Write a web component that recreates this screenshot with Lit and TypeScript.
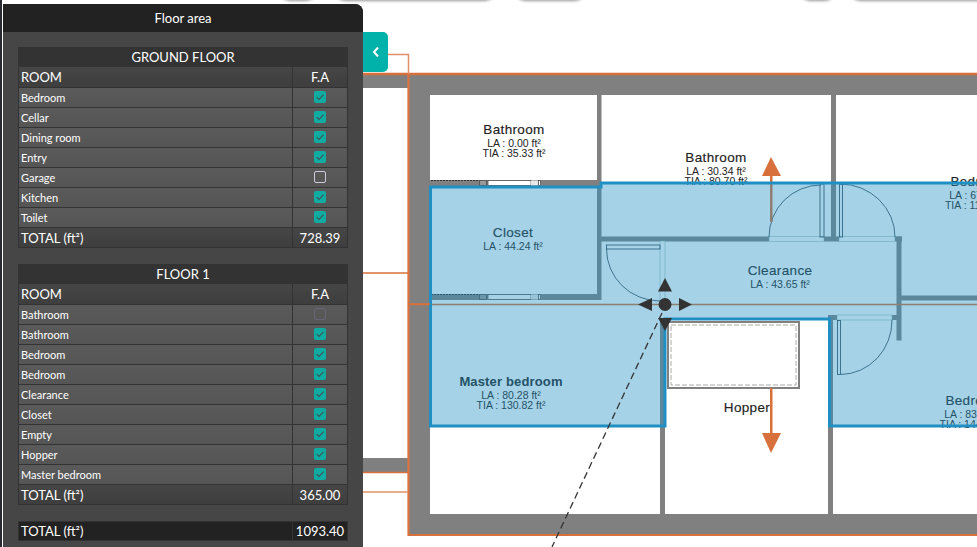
import { LitElement, css, html, svg } from "lit";
import { customElement } from "lit/decorators.js";

type Room = { name: string; on: boolean; dim?: boolean };

const groundFloor: Room[] = [
  { name: "Bedroom", on: true },
  { name: "Cellar", on: true },
  { name: "Dining room", on: true },
  { name: "Entry", on: true },
  { name: "Garage", on: false },
  { name: "Kitchen", on: true },
  { name: "Toilet", on: true },
];

const floorOne: Room[] = [
  { name: "Bathroom", on: false, dim: true },
  { name: "Bathroom", on: true },
  { name: "Bedroom", on: true },
  { name: "Bedroom", on: true },
  { name: "Clearance", on: true },
  { name: "Closet", on: true },
  { name: "Empty", on: true },
  { name: "Hopper", on: true },
  { name: "Master bedroom", on: true },
];

const WALL = "#808080";
const ORANGE = "#d8703c";
const PALE_ORANGE = "#e09068";

// name lines: [x, y, name, bold, la, tia]
const labels: [number, number, string, boolean, string, string][] = [
  [514, 134, "Bathroom", false, "LA : 0.00 ft²", "TIA : 35.33 ft²"],
  [716, 162, "Bathroom", false, "LA : 30.34 ft²", "TIA : 80.70 ft²"],
  [979, 186, "Bedroom", false, "LA : 67.20 ft²", "TIA : 118.40 ft²"],
  [513, 237, "Closet", false, "LA : 44.24 ft²", ""],
  [780, 275, "Clearance", false, "LA : 43.65 ft²", ""],
  [511, 386, "Master bedroom", true, "LA : 80.28 ft²", "TIA : 130.82 ft²"],
  [747, 412, "Hopper", false, "", ""],
  [974, 405, "Bedroom", false, "LA : 83.10 ft²", "TIA : 144.60 ft²"],
];

@customElement("floor-table")
export class FloorTable extends LitElement {
  static properties = {
    title: { type: String },
    rooms: { attribute: false },
    total: { type: String },
  };

  declare title: string;
  declare rooms: Room[];
  declare total: string;

  static styles = css`
    :host {
      display: block;
    }
    .grid {
      display: grid;
      grid-template-columns: 1fr 55px;
      border: 1px solid #333;
      border-top: 0;
      color: #fff;
    }
    .title {
      grid-column: 1 / 3;
      height: 20px;
      margin: 0 -1px;
      background: #333;
      font-size: 13px;
      line-height: 20px;
      text-align: center;
    }
    .cell {
      display: flex;
      align-items: center;
      height: 19px;
      padding-left: 2px;
      border-bottom: 1px solid #333;
      background: linear-gradient(#5a5a5a, #555);
      font-size: 11px;
    }
    .check {
      justify-content: center;
      padding: 0 0 2px;
      height: 17px;
      border-left: 1px solid #333;
    }
    .head {
      height: 20px;
      font-size: 13px;
      background: linear-gradient(#464646, #3e3e3e);
    }
    .head.check {
      padding: 0;
      height: 20px;
    }
    .last {
      border-bottom: 0;
      height: 19px;
    }
    .last.check {
      padding: 0;
      height: 19px;
    }
    .box {
      box-sizing: border-box;
      width: 12px;
      height: 12px;
      border: 1.5px solid #ccd;
      border-radius: 2px;
    }
    .box.dim {
      border-color: #667;
    }
    .box.on {
      border: 0;
      background: #10aca4;
    }
    .box svg {
      display: block;
    }
  `;

  renderBox(r: Room) {
    if (!r.on) return html`<div class="box ${r.dim ? "dim" : ""}"></div>`;
    return html`<div class="box on">
      <svg width="12" height="12" viewBox="0 0 12 12">
        <path d="M2.6 6.2 5 8.4 9.6 3.6" fill="none" stroke="#3a5555" stroke-width="1.1" />
      </svg>
    </div>`;
  }

  render() {
    return html`
      <div class="grid">
        <div class="title">${this.title}</div>
        <div class="cell head">ROOM</div>
        <div class="cell head check">F.A</div>
        ${this.rooms.map(
          (r) => html`
            <div class="cell">${r.name}</div>
            <div class="cell check">${this.renderBox(r)}</div>
          `
        )}
        <div class="cell head last">TOTAL (ft²)</div>
        <div class="cell head last check">${this.total}</div>
      </div>
    `;
  }
}

@customElement("app-root")
export class AppRoot extends LitElement {
  static styles = css`
    :host {
      display: block;
      position: relative;
      width: 977px;
      height: 547px;
      overflow: hidden;
      background: #fff;
      font-family: Lato, "Liberation Sans", sans-serif;
    }
    .plan {
      position: absolute;
      inset: 0;
    }
    .plan text {
      font-family: "Liberation Sans", Arial, sans-serif;
      fill: #222;
      text-anchor: middle;
    }
    .plan .name {
      font-size: 13.5px;
      letter-spacing: 0.35px;
      stroke: #222;
      stroke-width: 0.15px;
    }
    .plan .name.bold {
      font-size: 13px;
      font-weight: 700;
      letter-spacing: 0.15px;
      stroke: none;
    }
    .plan .area {
      font-size: 10.5px;
    }
    .pills {
      position: absolute;
      top: -20px;
      left: 280px;
      display: flex;
      height: 20px;
    }
    .pill {
      background: #fff;
      border-radius: 10px;
      box-shadow: 0 1px 3px rgba(0, 0, 0, 0.4);
    }
    .rail {
      position: absolute;
      left: 0;
      top: 0;
      bottom: 0;
      width: 2px;
      background: #2a2a33;
    }
    .panel {
      position: absolute;
      left: 3px;
      top: 4px;
      bottom: 0;
      width: 360px;
      background: #464646;
      border-top-right-radius: 8px;
      color: #fff;
    }
    .panel header {
      height: 28px;
      background: #222;
      border-top-right-radius: 8px;
      font-size: 13px;
      line-height: 28px;
      text-align: center;
    }
    .tables {
      display: flex;
      flex-direction: column;
      gap: 16px;
      padding: 15px 15px 0;
    }
    .grand {
      display: grid;
      grid-template-columns: 1fr 55px;
      height: 18px;
      border: 1px solid #333;
      background: #222;
      font-size: 13px;
      line-height: 18px;
    }
    .grand span {
      padding-left: 2px;
    }
    .grand span + span {
      padding: 0;
      border-left: 1px solid #333;
      text-align: center;
    }
    .toggle {
      position: absolute;
      left: 363px;
      top: 32px;
      width: 25px;
      height: 40px;
      display: flex;
      align-items: center;
      justify-content: center;
      background: #00b2a9;
      border-radius: 0 5px 5px 0;
    }
  `;

  renderPlan() {
    return svg`
      <!-- outer slab and its orange contour -->
      <rect x="363" y="75" width="45" height="13" fill=${WALL} />
      <rect x="363" y="458" width="45" height="14" fill=${WALL} />
      <rect x="409" y="75" width="568" height="459" fill=${WALL} />
      <rect x="430" y="95" width="547" height="419" fill="#fff" />

      <!-- partitions -->
      <g fill=${WALL}>
        <rect x="597" y="95" width="4.5" height="205" />
        <rect x="831" y="95" width="5" height="145" />
        <rect x="430" y="180" width="171" height="6" />
        <rect x="430" y="294" width="171" height="6" />
        <rect x="601" y="236.500" width="168" height="5" />
        <rect x="824" y="236.500" width="15" height="5" />
        <rect x="895" y="236.500" width="7" height="5" />
        <rect x="896.500" y="236.500" width="5" height="104" />
        <rect x="901" y="295.500" width="76" height="5" />
        <rect x="660" y="318" width="5" height="196" />
        <rect x="828" y="316" width="5" height="198" />
        <rect x="828" y="315" width="9" height="5" />
        <rect x="892" y="315" width="6" height="5" />
      </g>

      <!-- sliding windows in the closet walls -->
      ${[180, 294].map(
        (y) => svg`
          <path d="M431 ${y + 0.5}H479" stroke="#333" stroke-dasharray="2 1" />
          <rect x="479.500" y=${y + 0.5} width="7" height="5" fill="#999" stroke="#444" stroke-width="0.7" />
          <rect x="488" y=${y + 0.5} width="43" height="5" fill="#fff" stroke="#444" stroke-width="0.7" />
          <rect x="531" y=${y + 0.5} width="7" height="5" fill="#e8e8e8" />
          <rect x="538.500" y=${y + 0.5} width="2" height="5" fill="#fff" stroke="#444" stroke-width="0.7" />
        `
      )}

      <!-- door openings -->
      <g fill="#fff" stroke="#8aa" stroke-width="0.5">
        <rect x="769" y="236.500" width="55" height="5" />
        <rect x="839" y="236.500" width="56" height="5" />
        <rect x="837" y="315" width="55" height="5" />
        <rect x="660" y="241" width="5" height="60" />
      </g>
      <g fill="none" stroke="#234" stroke-width="0.8">
        <rect x="606.500" y="245" width="53.500" height="4" />
        <path d="M606.500 249A53.500 52 0 0 0 660 301" />
        <path d="M769 237A52 52 0 0 1 821 185" />
        <rect x="820" y="184" width="4" height="53" />
        <path d="M895 237A55 53 0 0 0 840 184" />
        <rect x="839.500" y="184" width="3" height="53" />
        <rect x="837.500" y="320.500" width="3" height="54" />
        <path d="M840.500 374.500A52 54 0 0 0 892 320" />
      </g>

      <!-- hopper -->
      <rect x="668" y="322" width="131" height="66" fill="#fff" stroke=${WALL} stroke-width="2" />
      <rect x="671" y="325" width="125" height="60" fill="none" stroke="#aaa" stroke-dasharray="5 2" />

      <!-- section line -->
      <path d="M408 304.500H977" stroke=${ORANGE} stroke-width="1.500" />
      <rect x="770" y="175" width="2.500" height="47" fill=${ORANGE} />
      <path d="M771 157 781 176H762Z" fill=${ORANGE} />
      <rect x="770" y="388" width="2.500" height="46" fill=${ORANGE} />
      <path d="M771 453 781 433H762Z" fill=${ORANGE} />

      ${labels.map(
        ([x, y, name, bold, la, tia]) => svg`
          <text x=${x} y=${y} class="name ${bold ? "bold" : ""}">${name}</text>
          ${la ? svg`<text x=${x} y=${y + 12.5} class="area">${la}</text>` : ""}
          ${tia ? svg`<text x=${x} y=${y + 22.5} class="area">${tia}</text>` : ""}
        `
      )}

      <!-- selected rooms -->
      <path
        d="M430.500 187H601V183H977V426H829.500V319H665V426H430.500Z"
        fill="rgb(40,148,195)"
        fill-opacity="0.42"
      />
      <path
        d="M977 183H601V187H430.500V426H665V319H829.500V426H977"
        fill="none"
        stroke="#2090c4"
        stroke-width="3"
      />

      <!-- contour -->
      <g fill="none">
        <path d="M363 74H977" stroke=${ORANGE} stroke-width="2.500" />
        <path d="M388 54.500H408.500V535" stroke=${PALE_ORANGE} stroke-width="1.500" />
        <path d="M408.500 74V535H977" stroke=${ORANGE} stroke-width="2" />
        <path d="M363 273H408M363 472.500H408" stroke=${ORANGE} stroke-width="1.500" />
        <path d="M363 492H408" stroke=${PALE_ORANGE} stroke-width="1.500" />
        <path d="M408 304H430" stroke=${ORANGE} stroke-width="1.500" />
      </g>

      <!-- move handle -->
      <path d="M662 313 552 547" stroke="#333" stroke-width="1.300" stroke-dasharray="7 4" />
      <g fill="#333">
        <circle cx="665" cy="304.500" r="6.500" />
        <path d="M665 278 672 291.500H658Z" />
        <path d="M665 331 672 318H658Z" />
        <path d="M638 304.500 652 298V311Z" />
        <path d="M692 304.500 679 298V311Z" />
      </g>
    `;
  }

  render() {
    return html`
      <svg class="plan" width="977" height="547" viewBox="0 0 977 547">${this.renderPlan()}</svg>
      <div class="pills">
        <div class="pill" style="width:36px"></div>
        <div class="pill" style="width:160px;margin-left:19px"></div>
        <div class="pill" style="width:70px;margin-left:20px"></div>
        <div class="pill" style="width:35px;margin-left:215px"></div>
        <div class="pill" style="width:140px;margin-left:15px"></div>
      </div>
      <div class="rail"></div>
      <section class="panel">
        <header>Floor area</header>
        <div class="tables">
          <floor-table title="GROUND FLOOR" .rooms=${groundFloor} total="728.39"></floor-table>
          <floor-table title="FLOOR 1" .rooms=${floorOne} total="365.00"></floor-table>
          <div class="grand"><span>TOTAL (ft²)</span><span>1093.40</span></div>
        </div>
      </section>
      <div class="toggle">
        <svg width="8" height="12" viewBox="0 0 8 12">
          <path d="M6 1.500 2 6l4 4.500" fill="none" stroke="#fff" stroke-width="2" />
        </svg>
      </div>
    `;
  }
}
